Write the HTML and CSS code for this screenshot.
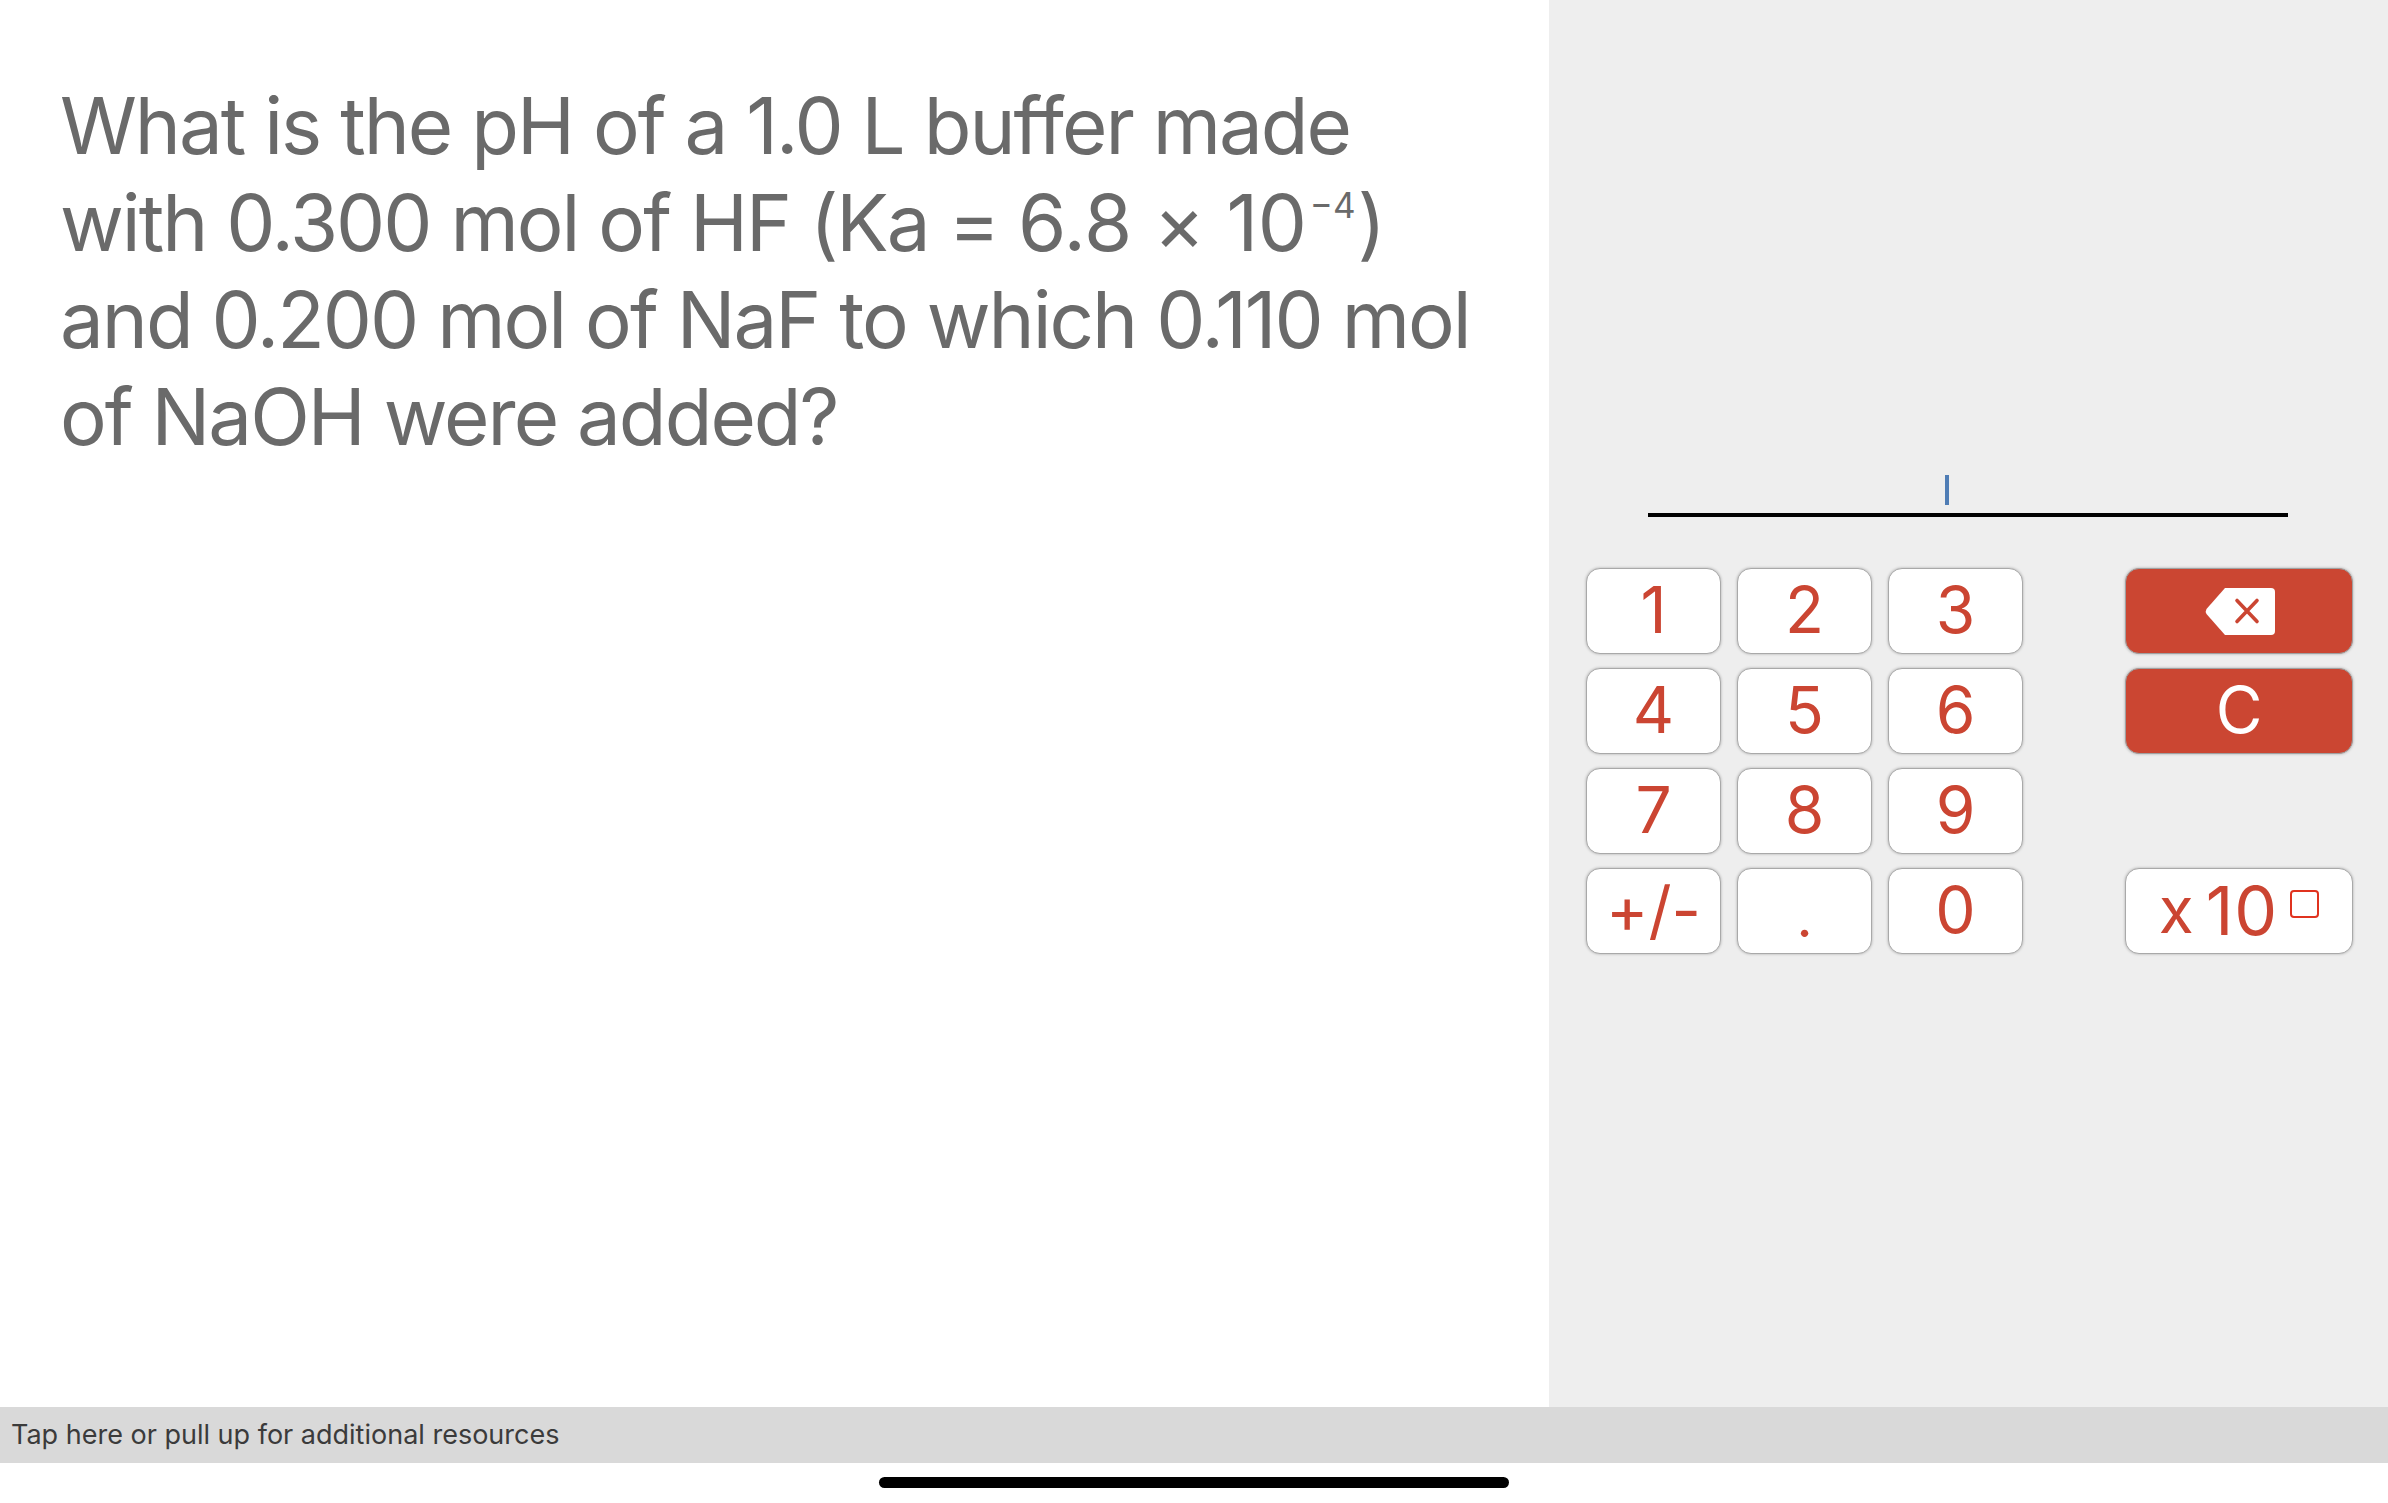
FILE: index.html
```html
<!DOCTYPE html>
<html>
<head>
<meta charset="utf-8">
<link rel="stylesheet" href="styles.css">
</head>
<body>
<div class="app">
  <div class="main">
    <div class="question">
      <p class="qtext">
        <span class="qline">What is the pH of a 1.0 L buffer made</span>
        <span class="qline">with 0.300 mol of HF (Ka = <span class="sci">6.8 × 10</span><sup class="exp">−4</sup>)</span>
        <span class="qline">and 0.200 mol of NaF to which 0.110 mol</span>
        <span class="qline">of NaOH were added?</span>
      </p>
    </div>
    <div class="panel">
      <div class="display">
        <div class="cursor"></div>
        <div class="answer-line"></div>
      </div>
      <div class="keypad">
        <button class="key">1</button>
        <button class="key">2</button>
        <button class="key">3</button>
        <div class="spacer"></div>
        <button class="key red backspace">
          <svg width="70" height="47" viewBox="0 0 70 47">
            <path d="M20 0 H66 Q70 0 70 4 V43 Q70 47 66 47 H20 L1.5 26 Q0 23.5 1.5 21 Z" fill="#ffffff"/>
            <path d="M32 12.5 L52 33.5 M52 12.5 L32 33.5" stroke="#cb4532" stroke-width="3.6" stroke-linecap="round" fill="none"/>
          </svg>
        </button>
        <button class="key">4</button>
        <button class="key">5</button>
        <button class="key">6</button>
        <div class="spacer"></div>
        <button class="key red">C</button>
        <button class="key">7</button>
        <button class="key">8</button>
        <button class="key">9</button>
        <div class="spacer"></div>
        <div class="spacer"></div>
        <button class="key">+/-</button>
        <button class="key dot">.</button>
        <button class="key">0</button>
        <div class="spacer"></div>
        <button class="key exp-key"><span class="xx">x</span><span class="ten">10</span><span class="box"></span></button>
      </div>
    </div>
  </div>
  <div class="resources">Tap here or pull up for additional resources</div>
  <div class="home">
    <div class="indicator"></div>
  </div>
</div>
</body>
</html>
```
FILE: styles.css
```css
html, body {
  margin: 0;
  padding: 0;
  background: #ffffff;
}
body {
  width: 2388px;
  height: 1503px;
  overflow: hidden;
  font-family: Inter, "Liberation Sans", sans-serif;
}
.app {
  display: flex;
  flex-direction: column;
  width: 2388px;
  height: 1503px;
}
.main {
  display: flex;
  height: 1407px;
}
.question {
  width: 1549px;
  background: #ffffff;
  box-sizing: border-box;
  padding: 77px 0 0 60px;
}
.qtext {
  margin: 0;
  color: #6a6a6a;
  font-size: 78px;
  line-height: 97px;
  letter-spacing: -2px;
}
.qline {
  display: block;
  white-space: nowrap;
}
.qline .sci {
  letter-spacing: -0.3px;
}
.qline .exp {
  font-size: 35px;
  vertical-align: 0.95em;
  line-height: 0;
  letter-spacing: 0;
  margin-left: 3px;
  margin-right: 2px;
}
.panel {
  flex: 1;
  background: #eeeeee;
  display: flex;
  flex-direction: column;
}
.display {
  margin: 475px 0 0 99px;
  width: 640px;
  display: flex;
  flex-direction: column;
}
.cursor {
  width: 4px;
  height: 30px;
  background: #4f7db5;
  margin-left: 297px;
}
.answer-line {
  margin-top: 8px;
  height: 4px;
  background: #000000;
}
.keypad {
  margin: 51px 0 0 37px;
  display: grid;
  grid-template-columns: 135px 135px 135px 70px 228px;
  grid-auto-rows: 86px;
  column-gap: 16px;
  row-gap: 14px;
}
.key {
  margin: 0;
  padding: 0;
  box-sizing: border-box;
  border: 1.5px solid #a9a9a9;
  border-radius: 14px;
  background: #ffffff;
  box-shadow: 0 0 3px rgba(0, 0, 0, 0.28);
  color: #cb4532;
  font-family: Inter, "Liberation Sans", sans-serif;
  font-size: 64px;
  line-height: 1;
  display: flex;
  align-items: center;
  justify-content: center;
  padding-bottom: 2px;
}
.key.red {
  background: #cb4632;
  color: #ffffff;
  border-color: #a0a0a0;
}
.key.backspace {
  padding-bottom: 0;
  padding-left: 1px;
}
.key.backspace svg {
  display: block;
}
.key.dot {
  padding-top: 14px;
  font-size: 56px;
}
.exp-key .xx {
  margin-right: 12px;
}
.exp-key .ten {
  font-size: 68px;
  letter-spacing: 1px;
}
.exp-key .box {
  width: 29px;
  height: 28px;
  box-sizing: border-box;
  border: 2.5px solid #e0331f;
  border-radius: 4px;
  margin-left: 12px;
  align-self: flex-start;
  margin-top: 21px;
}
.resources {
  height: 56px;
  background: #d9d9d9;
  color: #3b3b3b;
  font-size: 27px;
  line-height: 56px;
  padding-left: 11px;
  letter-spacing: 0;
}
.home {
  flex: 1;
  display: flex;
  justify-content: center;
  padding-top: 14px;
  background: #ffffff;
}
.indicator {
  width: 630px;
  height: 11px;
  border-radius: 6px;
  background: #000000;
}
```
